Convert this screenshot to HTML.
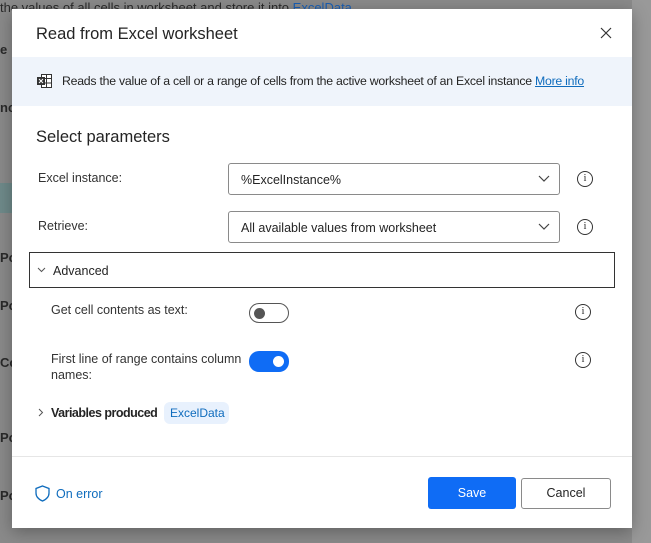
<!DOCTYPE html>
<html><head><style>
*{box-sizing:border-box;margin:0;padding:0}
body{width:651px;height:543px;overflow:hidden;background:#8a8a8a;font-family:"Liberation Sans",sans-serif;position:relative;color:#242424}
.bgtxt{position:absolute;color:#2a2a2a;font-size:13px}
.dlg{position:absolute;left:12px;top:9px;width:620px;height:519px;background:#fff;box-shadow:0 4px 16px rgba(0,0,0,.3)}
.a{position:absolute}
.title{left:24px;top:16px;font-size:16.5px;color:#242424}
.banner{left:0;top:48px;width:620px;height:49px;background:#eff4fb}
.sel{position:absolute;height:32px;border:1px solid #8a8a8a;border-radius:3px;width:332px;left:216px;font-size:12.5px;padding:9px 12px}
.info{position:absolute;width:16px;height:16px;border:1.2px solid #333;border-radius:50%;font-size:10px;text-align:center;line-height:14px;font-family:"Liberation Serif",serif}
.lbl{position:absolute;font-size:12.5px;color:#333}
</style></head><body>
<div class="bgtxt" style="left:0;top:0;">the values of all cells in worksheet and store it into <span style="color:#1a5fb4">ExcelData</span></div>
<div class="bgtxt" style="left:0;top:42px;font-weight:bold">e</div>
<div class="bgtxt" style="left:0;top:100px;font-weight:bold">nc</div>
<div class="bgtxt" style="left:0;top:250px;font-weight:bold">Po</div>
<div class="bgtxt" style="left:0;top:298px;font-weight:bold">Po</div>
<div class="bgtxt" style="left:0;top:355px;font-weight:bold">Co</div>
<div class="bgtxt" style="left:0;top:430px;font-weight:bold">Po</div>
<div class="bgtxt" style="left:0;top:488px;font-weight:bold">Po</div>
<div style="position:absolute;left:0;top:183px;width:12px;height:30px;background:#6f8a8a"></div>
<div style="position:absolute;left:632px;top:0;width:19px;height:543px;background:#999"></div>
<div class="dlg">
<div class="a title">Read from Excel worksheet</div>
<svg class="a" style="left:588px;top:18px" width="12" height="12"><path d="M1 1L11 11M11 1L1 11" stroke="#333" stroke-width="1.2"/></svg>
<div class="a banner">
<svg class="a" style="left:25px;top:17px" width="15" height="14"><rect x="4.5" y="0.5" width="10" height="13" fill="#fff" stroke="#333"/><path d="M4.5 4.5H14.5M4.5 9H14.5M9.5 .5V13.5" stroke="#333"/><rect x="0" y="3" width="8" height="8" fill="#333"/><path d="M2 5L6 9M6 5L2 9" stroke="#fff"/></svg>
<div class="a" style="left:50px;top:17px;font-size:12.3px;color:#242424;letter-spacing:-0.25px;white-space:nowrap">Reads the value of a cell or a range of cells from the active worksheet of an Excel instance <span style="color:#0f6cbd;text-decoration:underline">More info</span></div>
</div>
<div class="a" style="left:24px;top:119px;font-size:16.5px;color:#242424">Select parameters</div>
<div class="lbl" style="left:26px;top:162px">Excel instance:</div>
<div class="sel" style="top:154px">%ExcelInstance%</div>
<svg class="a" style="left:526px;top:166px" width="12" height="8"><path d="M1 1L6 6L11 1" stroke="#444" fill="none" stroke-width="1.2"/></svg>
<div class="info" style="left:565px;top:162px">i</div>
<div class="lbl" style="left:26px;top:210px">Retrieve:</div>
<div class="sel" style="top:202px">All available values from worksheet</div>
<svg class="a" style="left:526px;top:214px" width="12" height="8"><path d="M1 1L6 6L11 1" stroke="#444" fill="none" stroke-width="1.2"/></svg>
<div class="info" style="left:565px;top:210px">i</div>
<div class="a" style="left:17px;top:243px;width:586px;height:36px;border:1px solid #333"></div>
<svg class="a" style="left:25px;top:258px" width="9" height="6"><path d="M1 1L4.5 4.5L8 1" stroke="#555" fill="none"/></svg>
<div class="a" style="left:41px;top:255px;font-size:12.5px;color:#242424">Advanced</div>
<div class="lbl" style="left:39px;top:294px">Get cell contents as text:</div>
<div class="a" style="left:237px;top:294px;width:40px;height:20px;border:1px solid #555;border-radius:10px"><div style="position:absolute;left:4px;top:4px;width:11px;height:11px;border-radius:50%;background:#555"></div></div>
<div class="info" style="left:563px;top:295px">i</div>
<div class="lbl" style="left:39px;top:342px;line-height:16px">First line of range contains column<br>names:</div>
<div class="a" style="left:237px;top:342px;width:40px;height:21px;background:#0f6cf5;border-radius:10px"><div style="position:absolute;left:24px;top:5px;width:11px;height:11px;border-radius:50%;background:#fff"></div></div>
<div class="info" style="left:563px;top:343px">i</div>
<svg class="a" style="left:26px;top:399px" width="6" height="9"><path d="M1 1L4.5 4.5L1 8" stroke="#555" fill="none"/></svg>
<div class="a" style="left:39px;top:397px;font-size:12.5px;color:#242424;font-weight:bold;letter-spacing:-0.5px">Variables produced</div>
<div class="a" style="left:152px;top:393px;width:65px;height:22px;background:#e8f1fd;border-radius:6px;font-size:12px;color:#0f6cbd;padding:4px 6px">ExcelData</div>
<div class="a" style="left:0;top:447px;width:620px;height:1px;background:#e6e6e6"></div>
<svg class="a" style="left:23px;top:476px" width="15" height="17"><path d="M7.5 1L14 3.5V8C14 12 11 14.5 7.5 16C4 14.5 1 12 1 8V3.5Z" stroke="#0f6cbd" fill="none" stroke-width="1.3"/></svg>
<div class="a" style="left:44px;top:478px;font-size:12.5px;color:#0f6cbd">On error</div>
<div class="a" style="left:416px;top:468px;width:88px;height:32px;background:#0f6cf5;border-radius:3px;color:#fff;font-size:12.5px;text-align:center;line-height:32px">Save</div>
<div class="a" style="left:509px;top:469px;width:90px;height:31px;border:1px solid #8a8a8a;border-radius:3px;color:#242424;font-size:12.5px;text-align:center;line-height:29px">Cancel</div>
</div>
</body></html>
